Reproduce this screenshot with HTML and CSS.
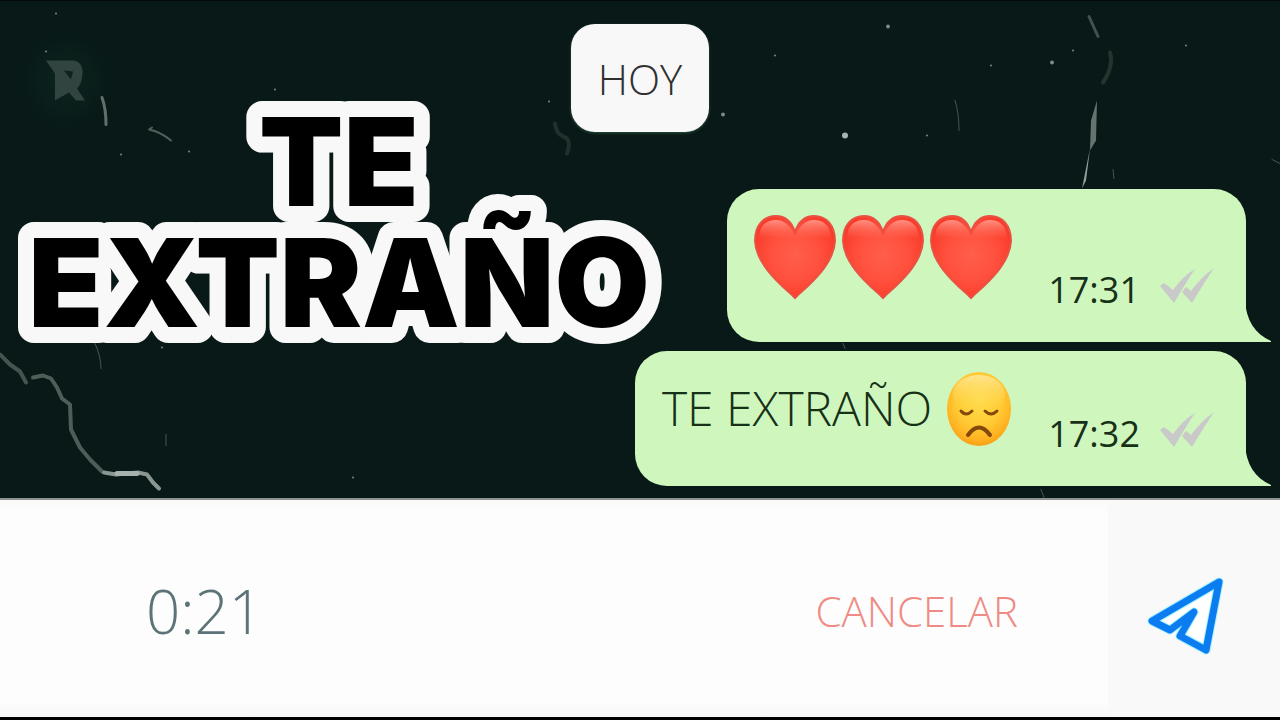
FILE: index.html
```html
<!DOCTYPE html>
<html lang="es">
<head>
<meta charset="utf-8">
<meta name="viewport" content="width=device-width, initial-scale=1">
<title>Te extraño</title>
<link rel="stylesheet" href="styles.css">
</head>
<body>
<svg class="defs" aria-hidden="true">
  <defs>
    <radialGradient id="heartFill" cx="0.5" cy="0.48" r="0.55">
      <stop offset="0" stop-color="#ff5f4c"/>
      <stop offset="0.6" stop-color="#ff4f3c"/>
      <stop offset="1" stop-color="#f93a28"/>
    </radialGradient>
    <linearGradient id="heartShine" x1="0" y1="0" x2="0" y2="1">
      <stop offset="0" stop-color="#ff9a8c" stop-opacity="0.9"/>
      <stop offset="0.9" stop-color="#ff6a58" stop-opacity="0"/>
    </linearGradient>
    <radialGradient id="faceFill" cx="0.5" cy="0.38" r="0.64">
      <stop offset="0" stop-color="#ffdc4a"/>
      <stop offset="0.55" stop-color="#ffcb34"/>
      <stop offset="0.85" stop-color="#ffb020"/>
      <stop offset="1" stop-color="#f99b14"/>
    </radialGradient>
    <linearGradient id="faceShine" x1="0" y1="0" x2="0" y2="1">
      <stop offset="0" stop-color="#ffeeb0" stop-opacity="0.7"/>
      <stop offset="0.9" stop-color="#ffdc60" stop-opacity="0"/>
    </linearGradient>
    <radialGradient id="glow">
      <stop offset="0" stop-color="#12352a" stop-opacity="0.4"/>
      <stop offset="1" stop-color="#12352a" stop-opacity="0"/>
    </radialGradient>
    <symbol id="heart" viewBox="0 0 82 86">
      <path d="M41 84C31 74 2 52 1 27C1 11 10 2 22 2C32 2 38 9 41 18C44 9 50 2 60 2C72 2 81 11 81 27C80 52 51 74 41 84Z" fill="url(#heartFill)" stroke="#e85244" stroke-width="2"/>
      <path d="M5 25C5 12 12 6 22 6C31 6 38 13 41 24C44 13 51 6 60 6C70 6 77 12 77 25C68 20 52 22 41 28C30 22 14 20 5 25Z" fill="url(#heartShine)"/>
    </symbol>
    <symbol id="checks" viewBox="0 0 54 38">
      <path d="M0 19L4 16L13 23Q23 9 35 2Q25 17 14 36Z"/>
      <path d="M22 25L26 20L31 24Q41 10 54 1Q44 16 32 36Z"/>
    </symbol>
    <symbol id="tail" viewBox="0 0 26 42" preserveAspectRatio="none">
      <path d="M0 0C1 20 10 34 26 41V42H0Z"/>
    </symbol>
  </defs>
</svg>
<main class="screen">
  <section class="chat">
    <svg class="backdrop" viewBox="0 0 1280 498" preserveAspectRatio="xMidYMid slice" aria-hidden="true">
      <ellipse cx="66" cy="80" rx="46" ry="50" fill="url(#glow)"/>
      <path fill="#31443f" fill-rule="evenodd" d="M46 60H74C81 61 84 68 82 77C81 83 79 86 77 88L85 100H76L69 92L55 100V73ZM64 70L71 79L73 71Z"/>
      <g fill="none" stroke-linecap="round" stroke-linejoin="round">
        <path d="M0 354L10 364L20 371L26 382" stroke="#46544f" stroke-width="4"/>
        <path d="M33 377L43 375L51 378L57 387L62 398L70 404L71 429L80 447L90 459L102 471" stroke="#4f5d59" stroke-width="4"/>
        <path d="M104 472L116 474L138 472L147 474L153 482L159 488" stroke="#8a9692" stroke-width="4"/>
        <path d="M117 473H137" stroke="#a6b0ac" stroke-width="5"/>
        <path d="M102 97Q106 108 106 124" stroke="#62706b" stroke-width="3"/>
        <path d="M152 127L149 129Q160 131 171 140" stroke="#52605b" stroke-width="2"/>
        <path d="M95 343Q101 356 101 368M166 434V445" stroke="#485853"/>
        <path d="M555 123Q556 133 563 136Q572 138 567 153" stroke="#20312d" stroke-width="4"/>
        <path d="M1089 16L1098 36" stroke="#43524e" stroke-width="3"/>
        <path d="M1110 52Q1114 66 1103 82" stroke="#23342f" stroke-width="4"/>
        <path d="M955 100Q959 112 959 130M1113 169L1114 178M1272 159L1280 163M843 343L845 348M1041 489L1044 497" stroke="#465651"/>
      </g>
      <path fill="#66736e" d="M1097 100L1091 120L1090 150L1096 140Z"/>
      <path fill="#94a09a" d="M1090 148L1082 188L1086 180Z"/>
      <g fill="#7c8b86">
        <circle cx="56" cy="13" r="1"/><circle cx="46" cy="51" r="1"/><circle cx="275" cy="89" r="1"/>
        <circle cx="121" cy="154" r="1"/><circle cx="189" cy="151" r="1"/><circle cx="162" cy="347" r="1"/>
        <circle cx="353" cy="477" r="1"/><circle cx="723" cy="114" r="2"/><circle cx="888" cy="26" r="2"/>
        <circle cx="991" cy="65" r="1"/><circle cx="1052" cy="62" r="2"/><circle cx="1073" cy="50" r="1"/>
        <circle cx="1186" cy="45" r="1"/><circle cx="927" cy="135" r="1"/><circle cx="845" cy="135" r="3" fill="#a7b3ae"/>
        <circle cx="549" cy="101" r="1"/><circle cx="775" cy="55" r="1"/>
      </g>
    </svg>

    <h1 class="title">
      <svg class="lettering" viewBox="0 0 680 260">
        <text x="339" y="114">TE</text>
        <text x="339" y="235">EXTRAÑO</text>
      </svg>
    </h1>

    <p class="day">HOY</p>

    <ol class="messages">
      <li class="bubble bubble-hearts">
        <span class="hearts" role="img" aria-label="Tres corazones rojos">
          <svg class="heart"><use href="#heart"/></svg>
          <svg class="heart"><use href="#heart"/></svg>
          <svg class="heart"><use href="#heart"/></svg>
        </span>
        <span class="meta"><time>17:31</time><svg class="checks" aria-hidden="true"><use href="#checks"/></svg></span>
        <svg class="tail" aria-hidden="true"><use href="#tail"/></svg>
      </li>
      <li class="bubble bubble-text">
        <span class="text">TE EXTRAÑO</span>
        <svg class="face" viewBox="0 0 66 76" role="img" aria-label="Cara triste">
          <ellipse cx="33" cy="38" rx="32" ry="37" fill="url(#faceFill)"/>
          <ellipse cx="33" cy="23" rx="26" ry="19" fill="url(#faceShine)"/>
          <g fill="none" stroke="#83480a" stroke-width="3" stroke-linecap="round">
            <path d="M15 40Q20 46 26 40M39 40Q45 46 51 40"/>
            <path d="M22 64Q33 49 44 64" stroke-width="4"/>
          </g>
        </svg>
        <span class="meta"><time>17:32</time><svg class="checks" aria-hidden="true"><use href="#checks"/></svg></span>
        <svg class="tail" aria-hidden="true"><use href="#tail"/></svg>
      </li>
    </ol>
  </section>

  <footer class="recorder">
    <div class="recording">
      <time class="elapsed">0:21</time>
      <button class="cancel" type="button">CANCELAR</button>
    </div>
    <button class="send" type="button" aria-label="Enviar">
      <svg class="plane" viewBox="0 0 80 80" aria-hidden="true">
        <path d="M73 6L6 45L24 54L48 36L34 60L60 74Z" fill="#fff" stroke="#a5f0ff" stroke-width="9" stroke-linejoin="round"/>
        <path d="M73 6L6 45L24 54L48 36L34 60L60 74Z" fill="none" stroke="#0b7df0" stroke-width="7" stroke-linejoin="round"/>
      </svg>
    </button>
  </footer>
</main>
</body>
</html>
```
FILE: styles.css
```css
* {
  box-sizing: border-box;
}

body {
  margin: 0;
  background: #000;
  font-family: "Open Sans", "Noto Sans", sans-serif;
  font-weight: 300;
}

.defs {
  position: absolute;
  width: 0;
  height: 0;
}

.screen {
  display: flex;
  flex-direction: column;
  min-height: 100vh;
  padding-bottom: 3px;
}

.chat {
  position: relative;
  display: flex;
  flex: 1;
  flex-direction: column;
  align-items: center;
  padding: 23px 34px 12px;
  overflow: hidden;
  border-top: 1px solid #03080a;
  background: #081917;
}

.backdrop {
  position: absolute;
  inset: 0;
  width: 100%;
  height: 100%;
}

.title {
  position: absolute;
  top: 91px;
  left: 0;
  margin: 0;
  font-family: Inter, sans-serif;
  font-size: 123px;
  font-weight: 900;
  font-optical-sizing: none;
}

.lettering {
  display: block;
  width: 680px;
  height: 260px;
  overflow: visible;
  fill: #000;
  stroke: #f8f8f8;
  stroke-width: 32px;
  stroke-linejoin: round;
  paint-order: stroke;
  text-anchor: middle;
}

.day {
  position: relative;
  margin: 0 0 57px;
  padding: 25px 27px 23px;
  border-radius: 24px;
  background: #f8f8f8;
  box-shadow: 0 1px 3px #2c4f40;
  color: #303030;
  font-size: 42px;
  line-height: 60px;
}

.messages {
  position: relative;
  display: flex;
  flex-direction: column;
  align-items: flex-end;
  gap: 9px;
  width: 100%;
  margin: auto 0 0;
  padding: 0;
  list-style: none;
}

.bubble {
  position: relative;
  display: flex;
  align-items: flex-start;
  padding: 20px 32px 20px 27px;
  border-radius: 32px 32px 0 32px;
  background: #cff7bd;
  color: #173018;
}

.bubble-hearts {
  min-height: 153px;
  padding-top: 25px;
}

.bubble-text {
  min-height: 135px;
}

.hearts {
  display: flex;
  gap: 6px;
}

.heart {
  width: 82px;
  height: 86px;
}

.text {
  font-size: 48px;
  line-height: 74px;
}

.face {
  width: 66px;
  height: 76px;
  margin-left: 14px;
}

.meta {
  display: flex;
  align-items: center;
  align-self: flex-end;
  gap: 20px;
  margin-bottom: 2px;
  margin-left: 36px;
  font-size: 36px;
  font-weight: 400;
  line-height: 60px;
}

.checks {
  width: 54px;
  height: 38px;
  margin-bottom: 8px;
  fill: #c9c9ca;
}

.tail {
  position: absolute;
  right: -25px;
  bottom: 0;
  width: 26px;
  height: 42px;
  fill: #cff7bd;
}

.recorder {
  display: flex;
  min-height: 219px;
  border-top: 2px solid #8c9391;
  background: #f9f9f9;
}

.recording {
  display: flex;
  flex: 1;
  align-items: center;
  justify-content: space-between;
  padding: 4px 90px 0 146px;
  background: linear-gradient(#f9f9f9, #fdfdfd 12px, #fdfdfd 200px, #f7f7f7);
}

.elapsed {
  color: #5c7377;
  font-size: 60px;
  line-height: 80px;
}

.cancel {
  padding: 0;
  border: 0;
  background: none;
  color: #ef8b84;
  font: inherit;
  font-size: 42px;
  line-height: 60px;
}

.send {
  display: grid;
  place-items: center;
  width: 172px;
  padding: 14px 16px 0 0;
  border: 0;
  background: #f9f9f9;
}

.plane {
  width: 80px;
  height: 80px;
}
```
